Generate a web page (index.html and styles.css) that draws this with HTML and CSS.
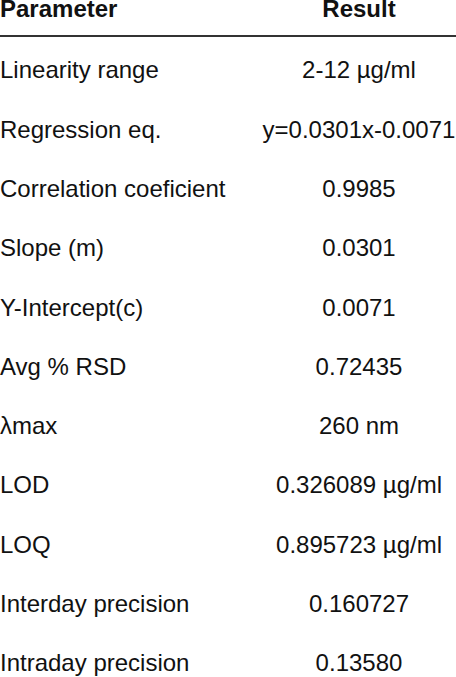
FILE: index.html
```html
<!DOCTYPE html>
<html>
<head>
<meta charset="utf-8">
<link rel="stylesheet" href="styles.css">
</head>
<body>
<div class="table">
  <div class="head">
    <div class="cell param">Parameter</div>
    <div class="cell result">Result</div>
  </div>
  <div class="body">
    <div class="row"><div class="cell param">Linearity range</div><div class="cell result">2-12 µg/ml</div></div>
    <div class="row"><div class="cell param">Regression eq.</div><div class="cell result">y=0.0301x-0.0071</div></div>
    <div class="row"><div class="cell param">Correlation coeficient</div><div class="cell result">0.9985</div></div>
    <div class="row"><div class="cell param">Slope (m)</div><div class="cell result">0.0301</div></div>
    <div class="row"><div class="cell param">Y-Intercept(c)</div><div class="cell result">0.0071</div></div>
    <div class="row"><div class="cell param">Avg % RSD</div><div class="cell result">0.72435</div></div>
    <div class="row"><div class="cell param">λmax</div><div class="cell result">260 nm</div></div>
    <div class="row"><div class="cell param">LOD</div><div class="cell result">0.326089 µg/ml</div></div>
    <div class="row"><div class="cell param">LOQ</div><div class="cell result">0.895723 µg/ml</div></div>
    <div class="row"><div class="cell param">Interday precision</div><div class="cell result">0.160727</div></div>
    <div class="row"><div class="cell param">Intraday precision</div><div class="cell result">0.13580</div></div>
  </div>
</div>
</body>
</html>
```
FILE: styles.css
```css
html, body {
  margin: 0;
  padding: 0;
  background: #fff;
}
body {
  width: 456px;
  height: 677px;
  overflow: hidden;
  font-family: "Liberation Sans", Arial, sans-serif;
  font-size: 24px;
  color: #111;
}
.table {
  width: 456px;
}
.head, .row {
  display: grid;
  grid-template-columns: 262px 194px;
}
.head {
  line-height: 18px;
  height: 18px;
  padding-bottom: 17px;
  border-bottom: 2px solid #333;
  font-weight: bold;
}
.body {
  padding-top: 3.35px;
}
.row {
  line-height: 59.3px;
  height: 59.3px;
}
.cell {
  white-space: nowrap;
}
.result {
  text-align: center;
}
```
